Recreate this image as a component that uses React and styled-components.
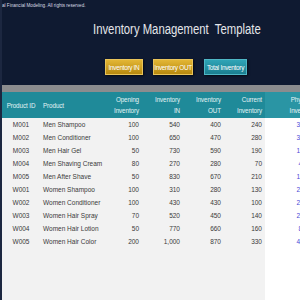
import React from "react";
import styled, { createGlobalStyle } from "styled-components";

const GlobalStyle = createGlobalStyle`
  html, body {
    margin: 0;
    padding: 0;
    width: 300px;
    height: 300px;
    overflow: hidden;
    background: #0f1a31;
  }
`;

const Sheet = styled.div`
  width: 300px;
  height: 300px;
  display: flex;
  flex-direction: column;
  overflow: hidden;
  border-left: 2px solid #1c2740;
  box-sizing: border-box;
  font-family: "Liberation Sans", Arial, sans-serif;
`;

const Banner = styled.div`
  height: 85px;
  background: #0f1a31;
  display: flex;
  flex-direction: column;
`;

const Copyright = styled.div`
  height: 12px;
  padding-top: 3px;
  box-sizing: border-box;
  font-size: 4.6px;
  color: #d8dce4;
  white-space: nowrap;
`;

const Title = styled.h1`
  margin: 9px 0 0 91px;
  font-weight: normal;
  font-size: 13.8px;
  line-height: 18px;
  color: #e4e6ea;
  white-space: pre;
  transform: scaleX(0.82);
  transform-origin: left center;
`;

const Buttons = styled.div`
  display: flex;
  margin: 20px 0 0 103px;
  gap: 10px;
`;

const Btn = styled.div`
  height: 16px;
  width: ${(p) => p.w}px;
  display: flex;
  align-items: center;
  justify-content: center;
  font-size: 6.4px;
  letter-spacing: -0.3px;
  white-space: nowrap;
  color: #fff;
  box-sizing: border-box;
  border: 1px solid ${(p) => (p.teal ? "#4fb7c6" : "#e9c45a")};
  background: ${(p) =>
    p.teal
      ? "linear-gradient(#2fa4b6, #1b7f90)"
      : "linear-gradient(#e3b635, #b7890f)"};
  box-shadow: 1px 1px 2px rgba(0, 0, 0, 0.6);
  margin-left: ${(p) => p.ml || 0}px;
`;

const Strip = styled.div`
  height: 7px;
  background: #8b8c8e;
`;

const Grid = styled.div`
  display: grid;
  grid-template-columns: 38px 60px 42px 41px 41px 41px 74px;
  grid-auto-rows: 13px;
  flex: 1;
  background: linear-gradient(to right, #f2f2f2 263px, #ffffff 263px);
  align-content: start;
`;

const Head = styled.div`
  background: ${(p) => (p.light ? "#2a95a4" : "#1f8a99")};
  grid-row: span 2;
  height: 26px;
  color: #e3f3f5;
  font-size: 6.3px;
  letter-spacing: -0.1px;
  line-height: 11px;
  display: flex;
  flex-direction: column;
  justify-content: center;
  align-items: ${(p) =>
    p.align === "left" ? "flex-start" : p.align === "center" ? "center" : "flex-end"};
  padding: ${(p) => (p.align === "left" ? "0 0 0 3px" : p.align === "center" ? "0" : "0 3px 0 0")};
  white-space: nowrap;
`;

const Cell = styled.div`
  font-size: 6.5px;
  color: ${(p) => (p.blue ? "#4b48d6" : "#3a3a3a")};
  display: flex;
  align-items: center;
  justify-content: ${(p) =>
    p.align === "left" ? "flex-start" : p.align === "center" ? "center" : "flex-end"};
  padding: ${(p) => (p.align === "left" ? "0 0 0 3px" : p.align === "center" ? "0" : "0 3px 0 0")};
  white-space: nowrap;
`;

const rows = [
  ["M001", "Men Shampoo", "100", "540", "400", "240", "350"],
  ["M002", "Men Conditioner", "100", "650", "470", "280", "340"],
  ["M003", "Men Hair Gel", "50", "730", "590", "190", "130"],
  ["M004", "Men Shaving Cream", "80", "270", "280", "70", "40"],
  ["M005", "Men After Shave", "50", "830", "670", "210", "150"],
  ["W001", "Women Shampoo", "100", "310", "280", "130", "200"],
  ["W002", "Women Conditioner", "100", "430", "430", "100", "250"],
  ["W003", "Women Hair Spray", "70", "520", "450", "140", "200"],
  ["W004", "Women Hair Lotion", "50", "770", "660", "160", "80"],
  ["W005", "Women Hair Color", "200", "1,000", "870", "330", "450"],
];

const aligns = ["center", "left", "right", "right", "right", "right", "center"];

export default function App() {
  return (
    <>
      <GlobalStyle />
      <Sheet>
        <Banner>
          <Copyright>al Financial Modeling. All rights reserved.</Copyright>
          <Title>{"Inventory Management  Template"}</Title>
          <Buttons>
            <Btn w={38}>Inventory IN</Btn>
            <Btn w={40}>Inventory OUT</Btn>
            <Btn w={43} teal ml={1}>Total Inventory</Btn>
          </Buttons>
        </Banner>
        <Strip />
        <Grid>
          <Head align="center">Product ID</Head>
          <Head align="left">Product</Head>
          <Head>
            <span>Opening</span>
            <span>Inventory</span>
          </Head>
          <Head>
            <span>Inventory</span>
            <span>IN</span>
          </Head>
          <Head>
            <span>Inventory</span>
            <span>OUT</span>
          </Head>
          <Head>
            <span>Current</span>
            <span>Inventory</span>
          </Head>
          <Head align="center" light>
            <span>Physical</span>
            <span>Inventory</span>
          </Head>
          {rows.map((r) =>
            r.map((v, i) => (
              <Cell key={r[0] + i} align={aligns[i]} blue={i === 6}>
                {v}
              </Cell>
            ))
          )}
        </Grid>
      </Sheet>
    </>
  );
}
